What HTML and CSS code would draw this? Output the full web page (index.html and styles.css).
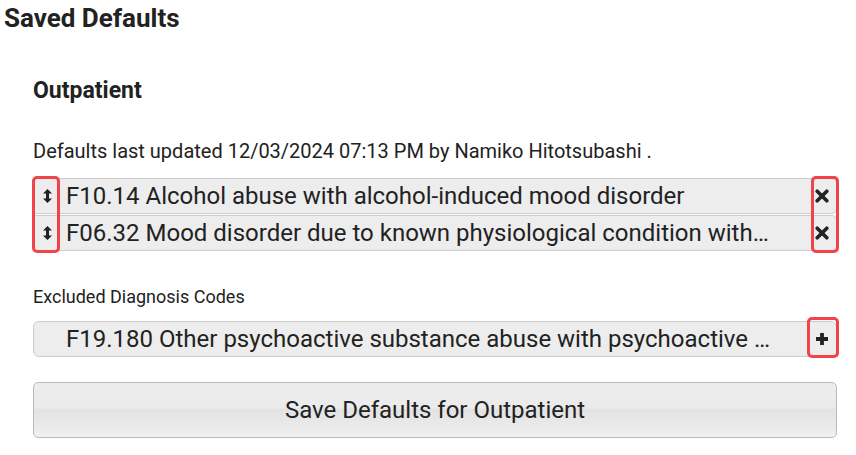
FILE: index.html
```html
<!DOCTYPE html>
<html>
<head>
<meta charset="utf-8">
<link rel="stylesheet" href="styles.css">
</head>
<body>
<h1 class="title">Saved Defaults</h1>
<div class="section">
  <h2 class="subtitle">Outpatient</h2>
  <p class="updated">Defaults last updated 12/03/2024 07:13 PM by Namiko Hitotsubashi .</p>
  <div class="list">
    <div class="row">
      <span class="handle"><svg width="9" height="14" viewBox="0 0 9 14"><path d="M4.5 0 L9 4.6 H6 V9.4 H9 L4.5 14 L0 9.4 H3 V4.6 H0 Z" fill="#222"/></svg></span>
      <span class="label">F10.14 Alcohol abuse with alcohol-induced mood disorder</span>
      <span class="act"><svg width="14" height="14" viewBox="0 0 14 14"><path d="M2.2 2.2 L11.8 11.8 M11.8 2.2 L2.2 11.8" stroke="#222" stroke-width="3.6" stroke-linecap="round"/></svg></span>
    </div>
    <div class="row">
      <span class="handle"><svg width="9" height="14" viewBox="0 0 9 14"><path d="M4.5 0 L9 4.6 H6 V9.4 H9 L4.5 14 L0 9.4 H3 V4.6 H0 Z" fill="#222"/></svg></span>
      <span class="label">F06.32 Mood disorder due to known physiological condition with major depressive-like episode</span>
      <span class="act"><svg width="14" height="14" viewBox="0 0 14 14"><path d="M2.2 2.2 L11.8 11.8 M11.8 2.2 L2.2 11.8" stroke="#222" stroke-width="3.6" stroke-linecap="round"/></svg></span>
    </div>
    <div class="hl hl-left"></div>
    <div class="hl hl-right"></div>
  </div>
  <p class="excl-label">Excluded Diagnosis Codes</p>
  <div class="list list-excl">
    <div class="row single">
      <span class="label">F19.180 Other psychoactive substance abuse with psychoactive substance-induced anxiety disorder</span>
      <span class="act"><svg width="14" height="14" viewBox="0 0 14 14"><path d="M7 1 V13 M1 7 H13" stroke="#222" stroke-width="3.8"/></svg></span>
    </div>
    <div class="hl hl-plus"></div>
  </div>
  <button class="save">Save Defaults for Outpatient</button>
</div>
</body>
</html>
```
FILE: styles.css
```css
html, body {
  margin: 0;
  padding: 0;
  background: #fff;
  font-family: Roboto, "Liberation Sans", sans-serif;
  color: #222;
}
.title {
  margin: 0;
  padding: 3px 0 0 4px;
  font-size: 26px;
  font-weight: 700;
  line-height: 30px;
}
.section {
  padding: 0 19px 0 33px;
}
.subtitle {
  margin: 43px 0 0;
  font-size: 23px;
  font-weight: 700;
  line-height: 30px;
}
.updated {
  margin: 34px 0 0;
  font-size: 20px;
  line-height: 22px;
}
.list {
  position: relative;
  margin-top: 16px;
}
.list-excl {
  margin-top: 13px;
}
.row {
  display: flex;
  align-items: center;
  height: 34px;
  border: 1px solid #ccc;
  background: #ededed;
  border-radius: 0 5px 5px 0;
  margin-bottom: 1px;
  font-size: 24px;
}
.handle {
  width: 26px;
  flex: none;
  display: flex;
  justify-content: center;
  margin-right: 6px;
}
.label {
  flex: 1;
  min-width: 0;
  white-space: nowrap;
  overflow: hidden;
  text-overflow: ellipsis;
  padding-right: 38px;
}
.act {
  width: 26px;
  flex: none;
  display: flex;
  justify-content: center;
  margin-right: 1px;
}
.row.single {
  border-radius: 6px;
  padding-left: 32px;
}
.hl {
  position: absolute;
  border: 3px solid #f0434a;
  border-radius: 5px;
}
.hl-left {
  left: -1px;
  top: -2px;
  width: 22px;
  height: 71px;
}
.hl-right {
  right: -2px;
  top: -2px;
  width: 22px;
  height: 71px;
}
.hl-plus {
  right: -2px;
  top: -4px;
  width: 26px;
  height: 35px;
}
.excl-label {
  margin: 35px 0 0;
  font-size: 18px;
  line-height: 22px;
}
.save {
  display: block;
  width: 100%;
  margin-top: 25px;
  height: 56px;
  border: 1px solid #bbb;
  border-radius: 5px;
  background: linear-gradient(#ededed 0%, #ebebeb 45%, #e2e2e2 50%, #f0f0f0 100%);
  font-family: Roboto, "Liberation Sans", sans-serif;
  font-size: 24px;
  color: #222;
}
```
